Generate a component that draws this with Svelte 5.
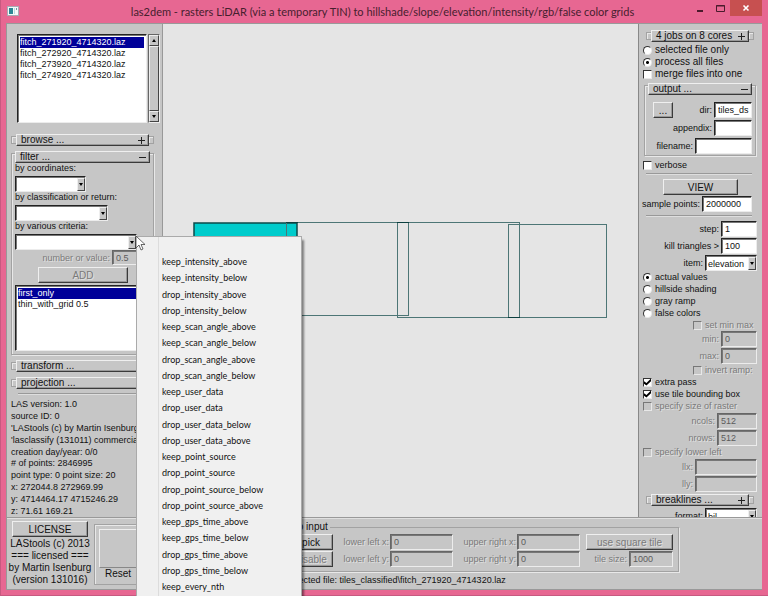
<script lang="ts">
	const files = [
		'fitch_271920_4714320.laz',
		'fitch_272920_4714320.laz',
		'fitch_273920_4714320.laz',
		'fitch_274920_4714320.laz'
	];

	const filters = ['first_only', 'thin_with_grid 0.5'];

	const facts = [
		'LAS version: 1.0',
		'source ID: 0',
		"'LAStools (c) by Martin Isenburg'",
		"'lasclassify (131011) commercial'",
		'creation day/year: 0/0',
		'# of points: 2846995',
		'point type: 0 point size: 20',
		'x: 272044.8 272969.99',
		'y: 4714464.17 4715246.29',
		'z: 71.61 169.21'
	];

	const criteria = [
		'keep_intensity_above',
		'keep_intensity_below',
		'drop_intensity_above',
		'drop_intensity_below',
		'keep_scan_angle_above',
		'keep_scan_angle_below',
		'drop_scan_angle_above',
		'drop_scan_angle_below',
		'keep_user_data',
		'drop_user_data',
		'drop_user_data_below',
		'drop_user_data_above',
		'keep_point_source',
		'drop_point_source',
		'drop_point_source_below',
		'drop_point_source_above',
		'keep_gps_time_above',
		'keep_gps_time_below',
		'drop_gps_time_above',
		'drop_gps_time_below',
		'keep_every_nth'
	];

	const ramps = ['actual values', 'hillside shading', 'gray ramp', 'false colors'];

	let selectedFile = $state(0);
	let selectedFilter = $state(0);
	let scope = $state('all');
	let ramp = $state('actual values');
</script>

{#snippet fold(title: string, sign: string)}
	<button class="bar">
		<span>{title}</span>
		<svg width="9" height="9" viewBox="0 0 9 9" aria-hidden="true">
			<path d={sign === '+' ? 'M1 4.5h7M4.5 1v7' : 'M1 4.5h7'} stroke="#222" fill="none" />
		</svg>
	</button>
{/snippet}

{#snippet field(id: string, label: string, value: string, size: string, disabled: boolean)}
	<div class="field" class:off={disabled}>
		<label for={id}>{label}</label>
		<input {id} type="text" class={size} {value} {disabled} />
	</div>
{/snippet}

{#snippet combo(id: string, value: string, size: string)}
	<div class="combo {size}">
		<select {id}><option>{value}</option></select>
		<span class="arrow" aria-hidden="true"></span>
	</div>
{/snippet}

<div class="window">
	<header class="titlebar">
		<svg class="app-icon" width="12" height="10" viewBox="0 0 12 10" aria-hidden="true">
			<rect x="0.5" y="0.5" width="11" height="9" fill="#f4f8f8" stroke="#a9a9b4" />
			<rect x="2" y="2" width="4" height="6" fill="#2c8794" />
			<rect x="7" y="2" width="1" height="6" fill="#b9dce0" />
			<rect x="9" y="2" width="1" height="2" fill="#7e90a0" />
		</svg>
		<h1>las2dem - rasters LiDAR (via a temporary TIN) to hillshade/slope/elevation/intensity/rgb/false color grids</h1>
		<div class="controls">
			<button aria-label="Minimize">
				<svg width="10" height="10" viewBox="0 0 10 10"><path d="M2 8h6" stroke="#4a1a2c" stroke-width="2" /></svg>
			</button>
			<button aria-label="Maximize">
				<svg width="10" height="10" viewBox="0 0 10 10"><path d="M1.5 2.5h8v6h-8zM1 3h9" stroke="#4a1a2c" fill="none" /></svg>
			</button>
			<button class="close" aria-label="Close">
				<svg width="8" height="8" viewBox="0 0 8 8"><path d="M1.5 1.5l5 5M6.5 1.5l-5 5" stroke="#fff" stroke-width="1.6" /></svg>
			</button>
		</div>
	</header>

	<main>
		<aside class="left">
			<div class="files">
				<ul class="list">
					{#each files as file, i}
						<li><button class:picked={selectedFile === i} onclick={() => (selectedFile = i)}>{file}</button></li>
					{/each}
				</ul>
				<div class="scroll" aria-hidden="true">
					<span class="up"></span>
					<span class="thumb"></span>
					<span class="down"></span>
				</div>
			</div>

			<div class="fold">{@render fold('browse ...', '+')}</div>

			<section class="group filter">
				{@render fold('filter ...', '-')}
				<label for="coords">by coordinates:</label>
				{@render combo('coords', '', 'w71')}
				<label for="classes">by classification or return:</label>
				{@render combo('classes', '', 'w93')}
				<label for="various">by various criteria:</label>
				{@render combo('various', '', 'w122')}
				{@render field('number', 'number or value:', '0.5', 'w38', true)}
				<button class="push add" disabled>ADD</button>
				<ul class="list">
					{#each filters as name, i}
						<li><button class:picked={selectedFilter === i} onclick={() => (selectedFilter = i)}>{name}</button></li>
					{/each}
				</ul>
			</section>

			<div class="fold">{@render fold('transform ...', '+')}</div>
			<div class="fold">{@render fold('projection ...', '+')}</div>
			<hr />
			<ul class="facts">
				{#each facts as fact}
					<li>{fact}</li>
				{/each}
			</ul>
		</aside>

		<svg class="view" role="img" aria-label="tile bounding boxes">
			<rect x="31" y="199" width="103" height="93" fill="#00cccc" stroke="#0b4a4a" stroke-width="1.5" />
			<g fill="none" stroke="#4d7676">
				<rect x="123.5" y="198.5" width="122" height="93" />
				<rect x="234.5" y="198.5" width="122" height="95" />
				<rect x="345.5" y="200.5" width="98" height="93" />
			</g>
			<path d="M123 198.5h12M234 198.5h12M345 293.5h12" stroke="#0b3f3f" />
		</svg>

		<aside class="right">
			<div class="fold">{@render fold('4 jobs on 8 cores', '+')}</div>
			<div class="options">
				<label><input type="radio" name="scope" value="one" bind:group={scope} />selected file only</label>
				<label><input type="radio" name="scope" value="all" bind:group={scope} />process all files</label>
				<label><input type="checkbox" />merge files into one</label>
			</div>

			<section class="group output">
				{@render fold('output ...', '-')}
				<div class="dir">
					<button class="push">...</button>
					{@render field('dir', 'dir:', 'tiles_ds', 'w38', false)}
				</div>
				{@render field('appendix', 'appendix:', '', 'w38', false)}
				{@render field('filename', 'filename:', '', 'w57', false)}
			</section>

			<label><input type="checkbox" />verbose</label>
			<hr />
			<button class="push view-btn">VIEW</button>
			<div class="samples">{@render field('samples', 'sample points:', '2000000', 'w50', false)}</div>
			<hr />

			<div class="fields">
				{@render field('step', 'step:', '1', 'w36', false)}
				{@render field('kill', 'kill triangles >', '100', 'w36', false)}
				<div class="field">
					<label for="item">item:</label>
					{@render combo('item', 'elevation', 'w52')}
				</div>
			</div>
			{#each ramps as name}
				<label><input type="radio" name="ramp" value={name} bind:group={ramp} />{name}</label>
			{/each}
			<label class="off inset"><input type="checkbox" disabled />set min max</label>
			{@render field('min', 'min:', '0', 'w36', true)}
			{@render field('max', 'max:', '0', 'w36', true)}
			<label class="off inset"><input type="checkbox" disabled />invert ramp:</label>
			<label><input type="checkbox" checked />extra pass</label>
			<label><input type="checkbox" checked />use tile bounding box</label>
			<label class="off"><input type="checkbox" disabled />specify size of raster</label>
			{@render field('ncols', 'ncols:', '512', 'w40', true)}
			{@render field('nrows', 'nrows:', '512', 'w40', true)}
			<label class="off"><input type="checkbox" disabled />specify lower left</label>
			{@render field('llx', 'llx:', '', 'w62', true)}
			{@render field('lly', 'lly:', '', 'w62', true)}
			<div class="fold last">{@render fold('breaklines ...', '+')}</div>
			<div class="field">
				<label for="format">format:</label>
				{@render combo('format', 'bil', 'w52')}
			</div>
		</aside>
	</main>

	<footer>
		<div class="license">
			<button class="push">LICENSE</button>
			<p>LAStools (c) 2013<br />=== licensed ===<br />by Martin Isenburg<br />(version 131016)</p>
		</div>
		<div class="reset">
			<button aria-label="Reset view"></button>
			<span>Reset</span>
		</div>
		<div class="input-area">
			<fieldset>
				<legend>to input</legend>
				<button class="push">pick</button>
				<label class="off" for="ll-x">lower left x:</label>
				<input id="ll-x" type="text" value="0" disabled />
				<label class="off" for="ur-x">upper right x:</label>
				<input id="ur-x" type="text" value="0" disabled />
				<button class="push square" disabled>use square tile</button>
				<button class="push" disabled>disable</button>
				<label class="off" for="ll-y">lower left y:</label>
				<input id="ll-y" type="text" value="0" disabled />
				<label class="off" for="ur-y">upper right y:</label>
				<input id="ur-y" type="text" value="0" disabled />
				<div class="square">{@render field('tile-size', 'tile size:', '1000', 'w44', true)}</div>
			</fieldset>
			<p>selected file: tiles_classified\fitch_271920_4714320.laz</p>
		</div>
	</footer>

	<ul class="menu" role="menu">
		{#each criteria as name}
			<li role="menuitem">{name}</li>
		{/each}
	</ul>
	<svg class="cursor" width="11" height="17" viewBox="0 0 11 17" aria-hidden="true">
		<path d="M1 1v12l3-3 2 5 2-1-2-4.500h4z" fill="#fff" stroke="#444" stroke-width="0.8" />
	</svg>
</div>

<style>
	:global(body) {
		margin: 0;
	}

	.window,
	.window * {
		box-sizing: border-box;
	}

	.window {
		position: relative;
		display: flex;
		flex-direction: column;
		height: 100vh;
		padding: 0 6px 6px;
		overflow: hidden;
		background: #e76792;
		box-shadow: inset 1px -1px #c75a80;
		font: 9px/12px 'Liberation Sans', Arial, sans-serif;
		color: #111;
	}

	button,
	input,
	select {
		margin: 0;
		padding: 0;
		border: 0;
		border-radius: 0;
		background: none;
		font: inherit;
		color: inherit;
		appearance: none;
		outline: none;
	}

	ul,
	p,
	h1 {
		margin: 0;
		padding: 0;
		list-style: none;
	}

	/* title bar */
	.titlebar {
		display: flex;
		flex: none;
		height: 23px;
	}

	.app-icon {
		margin: 6px 0 0 1px;
	}

	h1 {
		flex: 1;
		padding-left: 56px;
		font: 11px/23px Lato, sans-serif;
		text-align: center;
		white-space: nowrap;
		color: #46202e;
	}

	.controls {
		display: flex;
		height: 16px;
	}

	.controls button {
		display: flex;
		width: 20px;
		align-items: center;
		justify-content: center;
	}

	.controls .close {
		width: 32px;
		background: #c75050;
	}

	/* shared widgets */
	.off,
	button:disabled {
		color: #7a7a7a;
		text-shadow: 1px 1px #e0e0e0;
	}

	.push,
	.bar,
	.options,
	.license {
		font-size: 10px;
	}

	.push,
	.bar {
		border: 1px solid;
		border-color: #efefef #3a3a3a #3a3a3a #efefef;
		box-shadow: inset -1px -1px #999;
		background: #c6c6c6;
	}

	.push {
		height: 16px;
		line-height: 13px;
		text-align: center;
	}

	.bar {
		display: flex;
		width: 100%;
		height: 12px;
		padding: 0 2px 0 4px;
		align-items: center;
		justify-content: space-between;
		line-height: 10px;
	}

	.fold {
		display: flex;
		align-items: center;
	}

	.fold::before,
	.fold::after {
		content: '';
		flex: none;
		width: 4px;
		height: 6px;
		border: 1px solid #a2a2a2;
		box-shadow: inset 1px 1px #e8e8e8;
	}

	.fold::before {
		border-right: 0;
	}

	.fold::after {
		border-left: 0;
	}

	.group {
		display: flex;
		flex-direction: column;
		border: 1px solid #a2a2a2;
		box-shadow: inset 1px 1px #e8e8e8, 1px 1px #e8e8e8;
	}

	hr {
		height: 2px;
		margin: 0;
		border: 0;
		border-top: 1px solid #999;
		border-bottom: 1px solid #dedede;
	}

	input[type='text'],
	.combo,
	.list {
		border: 1px solid;
		border-color: #222 #ececec #ececec #222;
		box-shadow: inset 1px 1px #777;
		background: #fff;
	}

	input[type='text'] {
		height: 16px;
		padding: 0 0 0 3px;
	}

	input[type='text']:disabled {
		background: #c6c6c6;
		border-color: #666 #ececec #ececec #666;
		color: #5c5c5c;
	}

	input[type='radio'],
	input[type='checkbox'] {
		width: 9px;
		height: 9px;
		margin-right: 3px;
		border: 1px solid;
		border-color: #333 #e8e8e8 #e8e8e8 #333;
		background: #fff;
	}

	input[type='radio'] {
		border-radius: 50%;
	}

	input[type='radio']:checked {
		background: radial-gradient(circle, #000 0 1px, #fff 2px);
	}

	input[type='checkbox']:checked::before {
		content: '';
		display: block;
		width: 7px;
		height: 7px;
		background: #000;
		clip-path: polygon(0 40%, 35% 65%, 100% 0, 100% 40%, 35% 100%, 0 75%);
	}

	input[type='checkbox']:disabled {
		border-color: #777 #e8e8e8 #e8e8e8 #777;
		background: #c6c6c6;
	}

	.field {
		display: flex;
		align-items: center;
		justify-content: flex-end;
		gap: 2px;
		white-space: nowrap;
	}

	.combo {
		display: flex;
		flex: none;
		height: 16px;
		padding: 1px 0 0 2px;
	}

	.combo select {
		flex: 1;
		min-width: 0;
		line-height: 12px;
	}

	.arrow {
		display: grid;
		width: 8px;
		place-items: center;
		border: 1px solid;
		border-color: #eee #444 #444 #eee;
		background: #c6c6c6;
	}

	.arrow::before,
	.up::before,
	.down::before {
		content: '';
		border: 2px solid transparent;
		border-top: 3px solid #000;
		border-bottom: 0;
	}

	.list {
		padding: 2px;
	}

	.list li {
		display: flex;
		height: 11px;
	}

	.list button {
		flex: 1;
		min-width: 0;
		line-height: 11px;
		text-align: left;
		white-space: nowrap;
	}

	.list .picked {
		background: #000099;
		color: #fff;
	}

	.w36 { width: 36px; }
	.w38 { width: 38px; }
	.w40 { width: 40px; }
	.w44 { width: 44px; }
	.w50 { width: 50px; }
	.w52 { width: 52px; }
	.w57 { width: 57px; }
	.w62 { width: 62px; }
	.w71 { width: 71px; }
	.w93 { width: 93px; }
	.w122 { width: 122px; }

	/* panels */
	main {
		display: flex;
		flex: 1;
		min-height: 0;
		border-top: 1px solid #999;
		background: #c6c6c6;
	}

	.left,
	.right {
		display: flex;
		flex: none;
		flex-direction: column;
		overflow: hidden;
		background: #c6c6c6;
		white-space: nowrap;
	}

	.left > *,
	.right > * {
		flex: none;
	}

	.left {
		width: 157px;
		padding: 10px 8px 0 4px;
		border-left: 1px solid #999;
		border-right: 1px solid #999;
	}

	.files {
		display: flex;
		height: 89px;
		margin: 0 -6px 11px 6px;
		gap: 1px;
	}

	.files .list {
		width: 130px;
	}

	.scroll {
		display: flex;
		width: 12px;
		flex-direction: column;
		border: 1px solid;
		border-color: #666 #eee #eee #666;
		background: #c6c6c6;
	}

	.scroll span {
		display: grid;
		place-items: center;
		height: 11px;
		border: 1px solid;
		border-color: #eee #444 #444 #eee;
	}

	.scroll .thumb {
		flex: 1;
	}

	.scroll .up::before {
		border-top: 0;
		border-bottom: 3px solid #000;
	}

	.filter {
		margin: 7px 0 5px;
		padding: 0 3px 3px;
	}

	.group > .bar {
		flex: none;
		margin-top: -3px;
	}

	.filter > label {
		margin-bottom: 3px;
		line-height: 10px;
	}

	.filter input {
		height: 15px;
	}

	.filter .add {
		width: 90px;
		margin: 2px 0 2px 23px;
	}

	.filter .list {
		height: 66px;
	}

	.filter + .fold {
		margin-bottom: 5px;
	}

	.left hr {
		margin: 4px 4px 3px 7px;
	}

	.left .facts {
		display: grid;
		flex: 1;
		min-height: 0;
		grid-auto-rows: minmax(0, 1fr);
	}

	.view {
		flex: 1;
		min-width: 0;
		height: 100%;
		background: #e5e5e5;
	}

	.right {
		width: 124px;
		padding: 6px 5px 0 4px;
		border-left: 1px solid #888;
	}

	.right label {
		display: flex;
		height: 12px;
		align-items: center;
	}

	.right .fold {
		margin: 0 3px 2px;
	}

	.output {
		margin: 5px 1px 3px;
		padding: 0 3px 1px;
		gap: 2px;
	}

	.output .bar {
		margin-bottom: 5px;
	}

	.dir {
		display: flex;
		justify-content: space-between;
		padding-left: 5px;
	}

	.dir .push {
		width: 20px;
	}

	.right hr {
		margin: 2px 5px 4px 3px;
	}

	.view-btn {
		width: 75px;
		margin-left: 20px;
	}

	.samples {
		margin: 1px 5px 1px 0;
	}

	.fields {
		display: grid;
		gap: 1px;
	}

	.right .inset {
		margin-left: 50px;
	}

	.right > .field + .field,
	.right > .off + .field {
		margin-top: 1px;
	}

	.right > .inset + .field {
		margin-top: 0;
	}

	.right .last {
		margin: 2px 3px;
	}

	/* bottom strip */
	footer {
		display: flex;
		flex: none;
		height: 73px;
		padding: 3px 6px 0 5px;
		border: 1px solid #999;
		border-right: 0;
		box-shadow: inset 0 1px #e0e0e0;
		background: #c6c6c6;
		white-space: nowrap;
	}

	.license {
		display: flex;
		width: 76px;
		flex-direction: column;
		align-items: stretch;
	}

	.license p {
		margin: 1px -6px 0;
		text-align: center;
	}

	.reset {
		display: flex;
		flex-direction: column;
		width: 110px;
		margin: 3px 0 4px 6px;
		padding: 4px;
		border: 1px solid #a2a2a2;
		box-shadow: inset 1px 1px #e8e8e8;
		font-size: 10px;
	}

	.reset button {
		height: 40px;
		border: 1px solid;
		border-color: #eee #888 #888 #eee;
	}

	.reset span {
		padding-left: 6px;
	}

	.input-area {
		margin-left: 79px;
	}

	fieldset {
		display: grid;
		min-width: 0;
		margin: 0;
		padding: 1px 5px 4px;
		grid-template-columns: 44px 55px 63px 62px 63px 92px;
		gap: 1px;
		align-items: center;
		border: 1px solid #a2a2a2;
		box-shadow: 1px 1px #e8e8e8;
	}

	legend {
		padding: 0 2px 0 6px;
		font-size: 10px;
	}

	fieldset > label {
		text-align: right;
	}

	.square {
		margin-left: 5px;
	}

	.input-area p {
		margin-top: 2px;
		padding-left: 4px;
	}

	/* drop-down of the criteria combo, open over the page */
	.menu {
		position: absolute;
		top: 236px;
		bottom: 0;
		left: 136px;
		display: flex;
		width: 166px;
		flex-direction: column;
		justify-content: space-between;
		padding: 17px 0 1px 25px;
		border: 1px solid #aaa;
		border-bottom: 0;
		background: linear-gradient(90deg, #f0f0f0 21px, #dcdcdc 21px, #dcdcdc 22px, #f0f0f0 22px);
		box-shadow: 2px 4px 2px rgba(0, 0, 0, 0.45);
		font: 9px/16px Lato, sans-serif;
	}

	.cursor {
		position: absolute;
		top: 235px;
		left: 135px;
	}
</style>
